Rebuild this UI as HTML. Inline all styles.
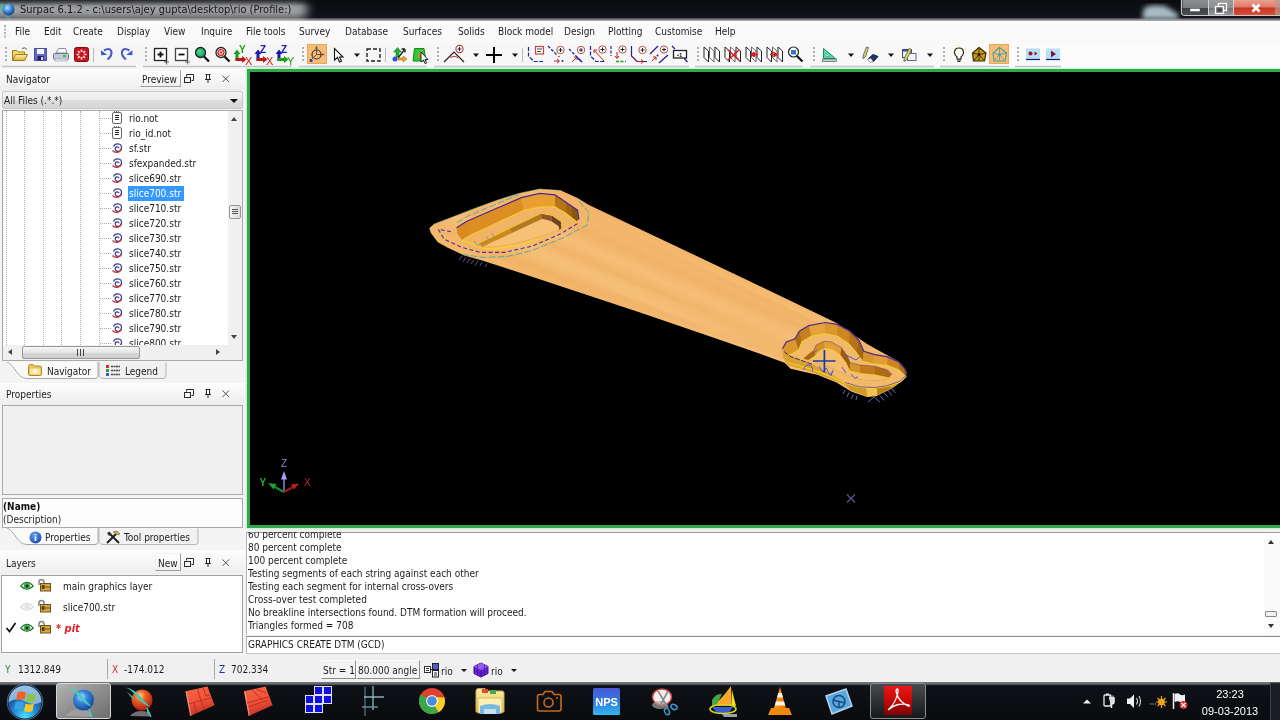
<!DOCTYPE html>
<html lang="en">
<head>
<meta charset="utf-8">
<title>Surpac 6.1.2</title>
<style>
*{box-sizing:border-box;margin:0;padding:0}
html,body{width:1280px;height:720px;overflow:hidden;background:#f0f0f0}
body{position:relative;font-family:"DejaVu Sans Condensed","DejaVu Sans","Liberation Sans",sans-serif;font-size:10px;color:#1c1c1c}
#root{position:absolute;left:0;top:0;width:1280px;height:720px;will-change:transform}
.abs{position:absolute}
.t{position:absolute;white-space:nowrap;line-height:14px;height:14px}
.vdot{width:0;border-left:1px dotted #b4b4b4}
.hdot{height:0;border-top:1px dotted #a8a8a8}
.btn{border:1px solid #f2f2f2;border-right-color:#9d9d9d;border-bottom-color:#9d9d9d;background:linear-gradient(#ffffff,#f0f0f0)}
#titlebar{left:0;top:0;width:1280px;height:21px;background:linear-gradient(#0a0c10,#0e1116 70%,#14171c 84%,#4a4c50 88%,#7a7c7e 93%,#9a9a9a 97%,#d8d8d8)}
#titleglow{left:-14px;top:0px;width:322px;height:19px;border-radius:11px;background:rgba(255,255,255,.62);filter:blur(5px)}
#title{left:20px;top:2px;font-size:11px;line-height:16px;height:16px;color:#161616}
#menubar{left:0;top:21px;width:1280px;height:22px;background:linear-gradient(#fcfcfc,#f8f8f8)}
#toolbar{left:0;top:43px;width:1280px;height:26px;background:linear-gradient(90deg,#f5f5f5,#f8f8f8 70%,#fcfcfc 85%)}
#leftbg{left:0;top:69px;width:247px;height:589px;background:#f4f4f4}
#viewport{left:247px;top:69px;width:1040px;height:459px;background:#000;border:3px solid #2ea84a;box-shadow:0 0 1.500px 1px #c4efcc}
#output{left:246px;top:532px;width:1034px;height:103px;background:#fefefe;border-top:1px solid #9a9a9a;border-left:1px solid #b5b5b5;overflow:hidden}
#cmd{left:246px;top:636px;width:1034px;height:18px;background:#fefefe;border-top:1px solid #8c8c8c;border-left:1px solid #b5b5b5;border-bottom:1px solid #c8c8c8}
#status{left:0;top:655px;width:1280px;height:27px;background:#f0f0f0}
#taskbar{left:0;top:682px;width:1280px;height:38px;background:#0b0d10}
</style>
</head>
<body>
<div id="root">
<div id="titlebar" class="abs"></div>
<div id="titleglow" class="abs"></div>
<div class="abs" style="left:0;top:0;width:330px;height:6px;background:linear-gradient(rgba(10,12,16,.600),rgba(10,12,16,0))"></div>
<svg class="abs" style="left:0;top:1px" width="16" height="17" viewBox="0 0 16 17"><defs><radialGradient id="orb" cx="0.4" cy="0.35" r="0.7"><stop offset="0" stop-color="#b8e0ff"/><stop offset="0.5" stop-color="#3888d8"/><stop offset="1" stop-color="#103878"/></radialGradient></defs><circle cx="8.500" cy="8.500" r="6" fill="url(#orb)"/><path d="M0.500 3Q3 3.500 4.500 6M0.500 6.500Q2.500 7 3.500 9M6 15Q7 16.500 9 16.500" stroke="#30b8b0" stroke-width="1.300" fill="none"/></svg>
<div id="title" class="t">Surpac 6.1.2 - c:\users\ajey gupta\desktop\rio (Profile:)</div>
<svg class="abs" style="left:1120px;top:0" width="160" height="20" viewBox="1120 0 160 20"><defs><filter id="bl"><feGaussianBlur stdDeviation="2.500"/></filter><linearGradient id="wmin" x1="0" y1="0" x2="0" y2="1"><stop offset="0" stop-color="#8c8e90"/><stop offset="0.500" stop-color="#7c7e82"/><stop offset="0.520" stop-color="#3c4046"/><stop offset="1" stop-color="#4a4e54"/></linearGradient><linearGradient id="wres" x1="0" y1="0" x2="0" y2="1"><stop offset="0" stop-color="#9a9c9e"/><stop offset="0.500" stop-color="#8e9092"/><stop offset="0.520" stop-color="#6e7276"/><stop offset="1" stop-color="#94989c"/></linearGradient><linearGradient id="wcls" x1="0" y1="0" x2="0" y2="1"><stop offset="0" stop-color="#eaa090"/><stop offset="0.480" stop-color="#e07868"/><stop offset="0.520" stop-color="#c83420"/><stop offset="1" stop-color="#d85038"/></linearGradient></defs><path d="M1144 8Q1150 4 1165 6L1178 14V19H1142Z" fill="#a8bcc4" filter="url(#bl)"/><path d="M1181.500 -1V12Q1181.500 15.500 1185 15.500H1280" fill="none" stroke="#c8c8c8" stroke-width="1.200"/><path d="M1182.500 0H1208V15H1185.500Q1182.500 15 1182.500 12Z" fill="url(#wmin)"/><rect x="1209" y="0" width="24" height="15" fill="url(#wres)"/><rect x="1234" y="0" width="46" height="15" fill="url(#wcls)"/><path d="M1208.500 0V15M1233.500 0V15" stroke="#d0d0d0" stroke-width="1"/><rect x="1190" y="8.500" width="10" height="3" fill="#fff" stroke="#555" stroke-width="0.500"/><rect x="1218.500" y="3.500" width="8" height="7" fill="#888" stroke="#fff" stroke-width="1.300"/><rect x="1215.500" y="6.500" width="8" height="7" fill="#777" stroke="#fff" stroke-width="1.300"/><rect x="1217.500" y="8.500" width="4" height="3" fill="#444"/><path d="M1252.500 4.500L1259.500 11.500M1259.500 4.500L1252.500 11.500" stroke="#fff" stroke-width="2.600"/><rect x="1275" y="0" width="5" height="15" fill="#b89890" opacity="0.700"/></svg>
<div id="menubar" class="abs"></div>
<svg class="abs" style="left:3px;top:24px" width="4" height="14" viewBox="0 0 4 14"><g fill="#b4b4b4"><rect x="1" y="1" width="2" height="2"/><rect x="1" y="4.500" width="2" height="2"/><rect x="1" y="8" width="2" height="2"/><rect x="1" y="11.500" width="2" height="2"/></g></svg>
<span class="t" style="left:15px;top:25px;">File</span>
<span class="t" style="left:44px;top:25px;">Edit</span>
<span class="t" style="left:73px;top:25px;">Create</span>
<span class="t" style="left:117px;top:25px;">Display</span>
<span class="t" style="left:164px;top:25px;">View</span>
<span class="t" style="left:201px;top:25px;">Inquire</span>
<span class="t" style="left:246px;top:25px;">File tools</span>
<span class="t" style="left:299px;top:25px;">Survey</span>
<span class="t" style="left:345px;top:25px;">Database</span>
<span class="t" style="left:403px;top:25px;">Surfaces</span>
<span class="t" style="left:458px;top:25px;">Solids</span>
<span class="t" style="left:498px;top:25px;">Block model</span>
<span class="t" style="left:564px;top:25px;">Design</span>
<span class="t" style="left:608px;top:25px;">Plotting</span>
<span class="t" style="left:655px;top:25px;">Customise</span>
<span class="t" style="left:715px;top:25px;">Help</span>
<div id="toolbar" class="abs"></div>
<svg class="abs" style="left:0;top:40px" width="1280" height="30" viewBox="0 40 1280 30"><defs><linearGradient id="fold" x1="0" y1="0" x2="0" y2="1"><stop offset="0" stop-color="#fff3b0"/><stop offset="1" stop-color="#e0b030"/></linearGradient><radialGradient id="gm" cx="0.4" cy="0.4" r="0.7"><stop offset="0" stop-color="#40e070"/><stop offset="1" stop-color="#1a8a80"/></radialGradient></defs><rect x="5" y="47" width="2" height="2" fill="#b0b0b0"/><rect x="5" y="51" width="2" height="2" fill="#b0b0b0"/><rect x="5" y="55" width="2" height="2" fill="#b0b0b0"/><rect x="5" y="59" width="2" height="2" fill="#b0b0b0"/><path d="M2 66.500H136" stroke="#c4c4c4" stroke-width="1.500"/><path d="M12.500 60.500V50.500H17L18.500 52H24.500V54" fill="#f5d860" stroke="#a07818"/><path d="M12.500 60.500L15.500 54.500H27.500L24.500 60.500Z" fill="url(#fold)" stroke="#a07818"/><path d="M22 48.500Q25 46.500 27 49.500" fill="none" stroke="#806010"/><rect x="34.500" y="48.500" width="12" height="12" fill="#6468c4" stroke="#4a4ea8"/><rect x="37" y="49" width="7" height="5" fill="#f4f4ff"/><rect x="37.500" y="56" width="6" height="4.500" fill="#202060"/><rect x="41" y="57" width="2" height="3" fill="#d0d0f0"/><path d="M56 53L58.500 48.500H65.500L67 53Z" fill="#fff" stroke="#8890a0"/><rect x="53.500" y="53.500" width="15" height="6" rx="1" fill="#c4c8d8" stroke="#70788c"/><rect x="55" y="59" width="12" height="2" fill="#e8e8f0" stroke="#8890a0" stroke-width="0.500"/><rect x="63" y="55" width="3" height="2" fill="#30c040"/><rect x="74.500" y="47.500" width="14" height="14" rx="2" fill="#c81420" stroke="#8a0810"/><g stroke="#ffdcdc" stroke-width="1.700"><path d="M81.500 49.500V52M81.500 57V59.500M76.500 54.500H79M84 54.500H86.500M78 51L79.800 52.800M83.200 56.200L85 58M85 51L83.200 52.800M79.800 56.200L78 58"/></g><path d="M93.500 48V62" stroke="#b8b8b8"/><path d="M107.500 59.500Q112.500 55 111.300 51.200Q109.500 47.300 104 50.500" stroke="#4a5cc4" stroke-width="2.100" fill="none"/><path d="M100.800 50.300L101.200 55.200L107.200 54.800Z" fill="#3a5ad4"/><path d="M125.900 59.500Q120.900 55 122.100 51.200Q123.900 47.300 129.400 50.500" stroke="#4a5cc4" stroke-width="2.100" fill="none"/><path d="M132.600 50.300L132.200 55.200L126.200 54.800Z" fill="#3a5ad4"/><rect x="145" y="47" width="2" height="2" fill="#b0b0b0"/><rect x="145" y="51" width="2" height="2" fill="#b0b0b0"/><rect x="145" y="55" width="2" height="2" fill="#b0b0b0"/><rect x="145" y="59" width="2" height="2" fill="#b0b0b0"/><path d="M143 66.500H292" stroke="#c4c4c4" stroke-width="1.500"/><rect x="154.500" y="48.500" width="12" height="12" fill="#fff" stroke="#222" stroke-width="1.300"/><path d="M157.500 54.500H163.500M160.500 51.500V57.500" stroke="#111" stroke-width="1.800"/><path d="M164 62H169M166.500 59.500V64.500" stroke="#333" stroke-width="0.800"/><rect x="175.500" y="48.500" width="12" height="12" fill="#fff" stroke="#444" stroke-width="1.300"/><path d="M178.500 54.500H184.500" stroke="#111" stroke-width="1.800"/><path d="M185 62H190M187.500 59.500V64.500" stroke="#555" stroke-width="0.800"/><circle cx="200.500" cy="52.500" r="5" fill="url(#gm)" stroke="#222" stroke-width="1.300"/><path d="M204 56.500L209 61.500" stroke="#111" stroke-width="2.200"/><circle cx="221" cy="52.500" r="5" fill="#fff" stroke="#222" stroke-width="1.300"/><circle cx="221" cy="52.500" r="3" fill="#f8c0c0" stroke="#d02020" stroke-width="1.200"/><circle cx="221" cy="52.500" r="1" fill="#c01010"/><path d="M224.500 56.500L229.500 61.500" stroke="#111" stroke-width="2.200"/><path d="M235.5 61V54H233.5L237 49.500L240.5 54H238.5V61Z" fill="#18a018"/><path d="M235.5 58H242V56L246.5 59.500L242 63V61H235.5Z" fill="#c01818"/><text x="239" y="53" font-size="10" font-weight="bold" fill="#18a018" font-family="Liberation Sans,sans-serif">Y</text><text x="245" y="64.500" font-size="11" fill="#d01818" font-family="Liberation Sans,sans-serif">X</text><path d="M256.5 61V54H254.5L258 49.500L261.5 54H259.5V61Z" fill="#1818b0"/><path d="M256.5 58H263V56L267.5 59.500L263 63V61H256.5Z" fill="#c01818"/><text x="260" y="53" font-size="10" font-weight="bold" fill="#2020b0" font-family="Liberation Sans,sans-serif">Z</text><text x="266" y="64.500" font-size="11" fill="#d01818" font-family="Liberation Sans,sans-serif">X</text><path d="M277.5 61V54H275.5L279 49.500L282.5 54H280.5V61Z" fill="#1818b0"/><path d="M277.5 58H284V56L288.5 59.500L284 63V61H277.5Z" fill="#18a018"/><text x="281" y="53" font-size="10" font-weight="bold" fill="#2020b0" font-family="Liberation Sans,sans-serif">Z</text><text x="287" y="64.500" font-size="11" fill="#18a018" font-family="Liberation Sans,sans-serif">Y</text><rect x="302" y="47" width="2" height="2" fill="#b0b0b0"/><rect x="302" y="51" width="2" height="2" fill="#b0b0b0"/><rect x="302" y="55" width="2" height="2" fill="#b0b0b0"/><rect x="302" y="59" width="2" height="2" fill="#b0b0b0"/><path d="M299 66.500H427" stroke="#c4c4c4" stroke-width="1.500"/><rect x="307.500" y="44.500" width="19" height="19" fill="#f8bc74" stroke="#e8a860"/><circle cx="316.500" cy="54.500" r="4.500" fill="none" stroke="#333" stroke-width="1.200"/><path d="M316.500 54.500V46.500M316.500 54.500H324M316.500 54.500L311 60" stroke="#555" stroke-width="1"/><path d="M315 48.500L316.500 46L318 48.500Z" fill="#208020"/><path d="M310 61.500L310.500 59L312.500 61Z" fill="#2030c0" stroke="#2030c0"/><path d="M322 53.500L325 54.500L322 55.500Z" fill="#c02020"/><path d="M334.500 48.500V60L337.500 57.500L339.500 62L341.500 61L339.500 57H343Z" fill="#fff" stroke="#111" stroke-width="1.100"/><path d="M354 53.500H360L357 57Z" fill="#111"/><rect x="367" y="49" width="13" height="12" fill="none" stroke="#222" stroke-width="1.400" stroke-dasharray="4 2"/><path d="M385.500 48V62" stroke="#b8b8b8"/><path d="M396 57V52H393.500L397.500 47.500L401.500 52H399V57Z" fill="#20b030" stroke="#107018" stroke-width="0.500"/><path d="M398 58L405 49M405 49H401.500M405 49V52.500" stroke="#222" stroke-width="1.300" fill="none"/><circle cx="395" cy="59" r="2.500" fill="#3050e0"/><path d="M398 58H403V56L407 59L403 62V60H398Z" fill="#f0a020" stroke="#a06010" stroke-width="0.500"/><path d="M413 61L414.500 48.500H424L426 61Z" fill="#28c838" stroke="#108820"/><path d="M416 58L421 50H423L419 58Z" fill="#c89030"/><path d="M421 52V62L423.500 60L425 63.500L426.500 63L425 59.500H428Z" fill="#fff" stroke="#111" stroke-width="0.900"/><rect x="437" y="47" width="2" height="2" fill="#b0b0b0"/><rect x="437" y="51" width="2" height="2" fill="#b0b0b0"/><rect x="437" y="55" width="2" height="2" fill="#b0b0b0"/><rect x="437" y="59" width="2" height="2" fill="#b0b0b0"/><path d="M434 66.500H689" stroke="#c4c4c4" stroke-width="1.500"/><path d="M444 62L454 52L464 62" fill="none" stroke="#222" stroke-width="1.200"/><path d="M450 57.500Q454 55 458 57.500" fill="none" stroke="#c03030"/><circle cx="459.500" cy="49" r="3.600" fill="#fff" stroke="#b04040" stroke-width="1.100"/><path d="M457.500 49H461.500M459.500 47V51" stroke="#222" stroke-width="1"/><path d="M473 53.500H479L476 57Z" fill="#111"/><path d="M486 55H502M494 47V63" stroke="#000" stroke-width="2"/><path d="M512 53.500H518L515 57Z" fill="#111"/><path d="M522.500 48V62" stroke="#b8b8b8"/><path d="M528.500 47V56L534 61.500H543" fill="none" stroke="#2020a0" stroke-width="1.200" stroke-dasharray="4 1.500"/><rect x="535.500" y="46.500" width="8" height="7.500" fill="#fff" stroke="#c04848" stroke-width="1.200"/><path d="M537 49H542M537 51.500H541" stroke="#444"/><path d="M548 46L557 55" stroke="#2020a0" stroke-width="1.300" stroke-dasharray="3 1.500"/><circle cx="560.5" cy="50" r="3.700" fill="#fff" stroke="#b05050" stroke-width="1"/><path d="M558.5 50H562.5M560.5 48V52" stroke="#222" stroke-width="1"/><path d="M554 61H559M557 59L559.500 61L557 63" stroke="#c02020" fill="none"/><circle cx="562.500" cy="61" r="1" fill="#2020a0"/><circle cx="559" cy="56.500" r="0.800" fill="#c02020"/><path d="M569 49L582 62" stroke="#2020a0" stroke-width="1.300" stroke-dasharray="3 1.500"/><circle cx="581" cy="50" r="3.700" fill="#fff" stroke="#b05050" stroke-width="1"/><path d="M579 50H583M581 48V52" stroke="#222" stroke-width="1"/><path d="M572 62L577 57M577 57H574M577 57V60" stroke="#c02020" fill="none"/><path d="M576.500 57L582 62" stroke="#2020a0" stroke-width="1.300"/><path d="M590.500 46V56L596 61.500H605" fill="none" stroke="#2020a0" stroke-width="1.200" stroke-dasharray="4 1.500"/><path d="M604 61L594 50M594 50H597M594 50V53" stroke="#c02020" fill="none"/><circle cx="602.5" cy="49.5" r="3.700" fill="#fff" stroke="#b05050" stroke-width="1"/><path d="M600.5 49.5H604.5M602.5 47.5V51.5" stroke="#222" stroke-width="1"/><path d="M611 46V56" stroke="#2020a0" stroke-width="1.200" stroke-dasharray="3 1.500"/><circle cx="622.5" cy="49.5" r="3.700" fill="#fff" stroke="#b05050" stroke-width="1"/><path d="M620.5 49.5H624.5M622.5 47.5V51.5" stroke="#222" stroke-width="1"/><path d="M617 52V58M615 56L617 58.500L619 56" stroke="#c02020" fill="none"/><path d="M616 61.500H626" stroke="#18a018" stroke-width="1.300" stroke-dasharray="3 1.500"/><path d="M631.500 46V56L637 61.500H647" fill="none" stroke="#2020a0" stroke-width="1.200"/><path d="M633 57L637 61.500H643M641 59.500L643.500 61.500L641 63.500" stroke="#c02020" fill="none"/><circle cx="642.5" cy="50" r="3.700" fill="#fff" stroke="#b05050" stroke-width="1"/><path d="M640.5 50H644.5M642.5 48V52" stroke="#222" stroke-width="1"/><path d="M650 54L658 46M659 63L668 55" stroke="#2020a0" stroke-width="1.300"/><circle cx="664" cy="49.5" r="3.700" fill="#fff" stroke="#b05050" stroke-width="1"/><path d="M662 49.5H666M664 47.5V51.5" stroke="#222" stroke-width="1"/><path d="M652 61L656 57M656 57H653M656 57V60" stroke="#c02020" fill="none"/><circle cx="657.500" cy="55.500" r="1" fill="#2020a0"/><path d="M672 46L675 49M684 58L687.500 62" stroke="#2020a0" stroke-width="1.300"/><rect x="673.500" y="50.500" width="13" height="7.500" fill="#fff" stroke="#222" stroke-width="1.300"/><text x="677" y="57" font-size="6" font-weight="bold" fill="#111" font-family="Liberation Sans,sans-serif">•1</text><rect x="697" y="47" width="2" height="2" fill="#b0b0b0"/><rect x="697" y="51" width="2" height="2" fill="#b0b0b0"/><rect x="697" y="55" width="2" height="2" fill="#b0b0b0"/><rect x="697" y="59" width="2" height="2" fill="#b0b0b0"/><path d="M695 66.500H803" stroke="#c4c4c4" stroke-width="1.500"/><path d="M704.0 47L708.5 51V62L704.0 57.500Z" fill="#fff" stroke="#222" stroke-width="1"/><path d="M709.5 47L714.0 51V62L709.5 57.500Z" fill="#fff" stroke="#666" stroke-width="1"/><path d="M715.0 47L719.5 51V62L715.0 57.500Z" fill="#fff" stroke="#222" stroke-width="1"/><path d="M725.0 47L729.5 51V62L725.0 57.500Z" fill="#fff" stroke="#222" stroke-width="1"/><path d="M730.5 47L735.0 51V62L730.5 57.500Z" fill="#fff" stroke="#666" stroke-width="1"/><path d="M736.0 47L740.5 51V62L736.0 57.500Z" fill="#fff" stroke="#222" stroke-width="1"/><path d="M728 50L739 60M739 50L728 60" stroke="#e01818" stroke-width="1.600"/><path d="M746.0 47L750.5 51V62L746.0 57.500Z" fill="#fff" stroke="#222" stroke-width="1"/><path d="M751.5 47L756.0 51V62L751.5 57.500Z" fill="#fff" stroke="#666" stroke-width="1"/><path d="M757.0 47L761.5 51V62L757.0 57.500Z" fill="#fff" stroke="#222" stroke-width="1"/><path d="M758 54.500H752M754.500 52L751.500 54.500L754.500 57" stroke="#e01818" stroke-width="1.600" fill="none"/><circle cx="754" cy="54.500" r="1.700" fill="#e01818"/><path d="M767.0 47L771.5 51V62L767.0 57.500Z" fill="#fff" stroke="#222" stroke-width="1"/><path d="M772.5 47L777.0 51V62L772.5 57.500Z" fill="#fff" stroke="#666" stroke-width="1"/><path d="M778.0 47L782.5 51V62L778.0 57.500Z" fill="#fff" stroke="#222" stroke-width="1"/><path d="M770 54.500H776M773.500 52L776.500 54.500L773.500 57" stroke="#e01818" stroke-width="1.600" fill="none"/><circle cx="775" cy="54.500" r="1.700" fill="#e01818"/><circle cx="793.500" cy="52" r="5" fill="#fff" stroke="#222" stroke-width="1.200"/><rect x="791" y="50" width="5" height="4.500" fill="#3078d8"/><path d="M797 56L802.500 61.500" stroke="#111" stroke-width="2.200"/><rect x="813" y="47" width="2" height="2" fill="#b0b0b0"/><rect x="813" y="51" width="2" height="2" fill="#b0b0b0"/><rect x="813" y="55" width="2" height="2" fill="#b0b0b0"/><rect x="813" y="59" width="2" height="2" fill="#b0b0b0"/><path d="M810 66.500H934" stroke="#c4c4c4" stroke-width="1.500"/><path d="M823.500 48.500V58.500H835.500Z" fill="#58d8b0" stroke="#208868"/><path d="M826 56.500V53.500L829.500 56.500Z" fill="#e8fff8" stroke="#208868" stroke-width="0.500"/><rect x="822.500" y="59" width="14" height="2.500" fill="#c8d0d0" stroke="#506060" stroke-width="0.700"/><path d="M848 53.500H854L851 57Z" fill="#111"/><path d="M863 56L866.500 47L868.500 47.500L865.500 57L863 58.500Z" fill="#d0d868" stroke="#555" stroke-width="0.800"/><path d="M868 59L873 54.500L878 56.500L873.500 61.500Z" fill="#183868" stroke="#102040"/><path d="M867.500 59.500L870 62.500L873.500 61.500L870.500 58Z" fill="#f0f0f0" stroke="#666" stroke-width="0.600"/><path d="M888 53.500H894L891 57Z" fill="#111"/><rect x="902.500" y="49.500" width="9" height="8" fill="#f0f0f8" stroke="#404878"/><rect x="902.500" y="49.500" width="9" height="2" fill="#404898"/><rect x="907.500" y="53.500" width="8.500" height="7" fill="#f4f4ff" stroke="#606890"/><path d="M904 59L909 48.500L911.500 49.500L906.500 60L904 61.500Z" fill="#d8e050" stroke="#555" stroke-width="0.800"/><path d="M927 53.500H933L930 57Z" fill="#111"/><rect x="943" y="47" width="2" height="2" fill="#b0b0b0"/><rect x="943" y="51" width="2" height="2" fill="#b0b0b0"/><rect x="943" y="55" width="2" height="2" fill="#b0b0b0"/><rect x="943" y="59" width="2" height="2" fill="#b0b0b0"/><path d="M940 66.500H1009" stroke="#c4c4c4" stroke-width="1.500"/><g stroke="#f0f080" stroke-width="1"><path d="M959 44.500V46.500M952 48L953.500 49.500M966 48L964.500 49.500M950.500 53H952.500M965.500 53H967.500"/></g><path d="M959 48Q954.500 48 954.500 52.500Q954.500 55 957 57V59H961V57Q963.500 55 963.500 52.500Q963.500 48 959 48Z" fill="#fffff0" stroke="#222" stroke-width="1.200"/><path d="M957 60H961M957.500 61.500H960.500" stroke="#222" stroke-width="1"/><path d="M979 47.500L986 53L984.500 61H973.500L972.500 53Z" fill="#c89820" stroke="#3a2a08" stroke-width="1.200"/><path d="M979 47.500V61M972.500 53L979 54.500L986 53M979 54.500L973.500 61M979 54.500L984.500 61" stroke="#3a2a08" stroke-width="0.900" fill="none"/><circle cx="979" cy="54.500" r="1.300" fill="#1a1000"/><rect x="989.500" y="44.500" width="19" height="19" fill="#f8bc74" stroke="#e8a860"/><path d="M999.500 47.500L1006.500 53L1005 61H994L993 53Z" fill="none" stroke="#48a0a0" stroke-width="1.100"/><path d="M999.500 47.500V61M993 53L999.500 54.500L1006.500 53M999.500 54.500L994 61M999.500 54.500L1005 61" stroke="#48a0a0" stroke-width="0.800" fill="none"/><circle cx="999.500" cy="54.500" r="1.300" fill="#30a0c0"/><rect x="1017" y="47" width="2" height="2" fill="#b0b0b0"/><rect x="1017" y="51" width="2" height="2" fill="#b0b0b0"/><rect x="1017" y="55" width="2" height="2" fill="#b0b0b0"/><rect x="1017" y="59" width="2" height="2" fill="#b0b0b0"/><path d="M1015 66.500H1061" stroke="#c4c4c4" stroke-width="1.500"/><rect x="1026" y="48.500" width="14" height="11" fill="#b8e0f4"/><path d="M1026 59.500H1040" stroke="#181878" stroke-width="1.200"/><circle cx="1030.500" cy="53.500" r="2" fill="#a01030"/><path d="M1034.500 51.500L1037.500 53.500L1034.500 55.500Z" fill="#a01030"/><rect x="1046" y="48.500" width="14" height="11" fill="#b8e0f4"/><path d="M1046 59.500H1060" stroke="#181878" stroke-width="1.200"/><path d="M1051 50.500L1056 54L1051 57.500Z" fill="#801040"/></svg>
<div id="leftbg" class="abs"></div>
<div class="abs" style="left:0;top:69px;width:245px;height:22px;background:linear-gradient(#fdfdfd,#eeeeee)"></div>
<span class="t" style="left:6px;top:73px;">Navigator</span>
<div class="abs btn" style="left:140px;top:70px;width:41px;height:17px"></div><span class="t" style="left:142px;top:73px;">Preview</span>
<svg class="abs" style="left:182px;top:72px" width="52" height="14" viewBox="0 0 52 14"><g fill="none" stroke="#2a2a2a" stroke-width="1"><path d="M4.500 4.500V2.500H11.500V8.500H9.500"/><rect x="2.500" y="5.500" width="6" height="5"/><path d="M23.500 2.500H28.500M24.500 2.500V7.500H27.500V2.500M23 7.500H29M26 7.500V11"/><path d="M40.500 3.500L47 10M47 3.500L40.500 10" stroke="#444" stroke-width="0.900"/></g></svg>
<div class="abs" style="left:2px;top:91px;width:241px;height:18px;border:1px solid #c8c8c8;border-radius:2px;background:linear-gradient(#f4f4f4,#ebebeb 50%,#dddddd 52%,#d6d6d6)"></div>
<span class="t" style="left:4px;top:94px;">All Files (.*.*)</span>
<div class="abs" style="left:230px;top:99px;border:4px solid transparent;border-top:4px solid #111;border-bottom:0"></div>
<div class="abs" id="tree" style="left:2px;top:110px;width:241px;height:251px;background:#fff;border:1px solid #a9a9a9;overflow:hidden">
<div class="abs vdot" style="left:3px;top:0;height:234px"></div>
<div class="abs vdot" style="left:21px;top:0;height:234px"></div>
<div class="abs vdot" style="left:40px;top:0;height:234px"></div>
<div class="abs vdot" style="left:58px;top:0;height:234px"></div>
<div class="abs vdot" style="left:77px;top:0;height:234px"></div>
<div class="abs vdot" style="left:96px;top:0;height:234px"></div>
<div class="abs hdot" style="left:97px;top:7px;width:11px"></div>
<svg class="abs" style="left:108px;top:0px" width="12" height="14" viewBox="0 0 12 14"><rect x="1.500" y="1.500" width="9" height="11" rx="1.500" fill="#fff" stroke="#666"/><path d="M3 0.500H9" stroke="#777" stroke-dasharray="1 1"/><path d="M4 4.500H8M4 6.500H8M4 8.500H8" stroke="#222"/></svg>
<span class="t" style="left:126px;top:1px;">rio.not</span>
<div class="abs hdot" style="left:97px;top:22px;width:11px"></div>
<svg class="abs" style="left:108px;top:15px" width="12" height="14" viewBox="0 0 12 14"><rect x="1.500" y="1.500" width="9" height="11" rx="1.500" fill="#fff" stroke="#666"/><path d="M3 0.500H9" stroke="#777" stroke-dasharray="1 1"/><path d="M4 4.500H8M4 6.500H8M4 8.500H8" stroke="#222"/></svg>
<span class="t" style="left:126px;top:16px;">rio_id.not</span>
<div class="abs hdot" style="left:97px;top:37px;width:11px"></div>
<svg class="abs" style="left:108px;top:31px" width="13" height="12" viewBox="0 0 13 12"><path d="M2.500 4.500C4 0.800 10.500 1 10.500 5.500C10.500 10 4.500 10.500 4.200 7C4 4.500 8 4.300 8 6.300" fill="none" stroke="#3a3f8f" stroke-width="1.200"/><path d="M1.500 8.500C4 11.500 9 11 10.500 7" fill="none" stroke="#d03030" stroke-width="1.200"/></svg>
<span class="t" style="left:126px;top:31px;">sf.str</span>
<div class="abs hdot" style="left:97px;top:52px;width:11px"></div>
<svg class="abs" style="left:108px;top:46px" width="13" height="12" viewBox="0 0 13 12"><path d="M2.500 4.500C4 0.800 10.500 1 10.500 5.500C10.500 10 4.500 10.500 4.200 7C4 4.500 8 4.300 8 6.300" fill="none" stroke="#3a3f8f" stroke-width="1.200"/><path d="M1.500 8.500C4 11.500 9 11 10.500 7" fill="none" stroke="#d03030" stroke-width="1.200"/></svg>
<span class="t" style="left:126px;top:46px;">sfexpanded.str</span>
<div class="abs hdot" style="left:97px;top:67px;width:11px"></div>
<svg class="abs" style="left:108px;top:61px" width="13" height="12" viewBox="0 0 13 12"><path d="M2.500 4.500C4 0.800 10.500 1 10.500 5.500C10.500 10 4.500 10.500 4.200 7C4 4.500 8 4.300 8 6.300" fill="none" stroke="#3a3f8f" stroke-width="1.200"/><path d="M1.500 8.500C4 11.500 9 11 10.500 7" fill="none" stroke="#d03030" stroke-width="1.200"/></svg>
<span class="t" style="left:126px;top:61px;">slice690.str</span>
<div class="abs hdot" style="left:97px;top:82px;width:11px"></div>
<svg class="abs" style="left:108px;top:76px" width="13" height="12" viewBox="0 0 13 12"><path d="M2.500 4.500C4 0.800 10.500 1 10.500 5.500C10.500 10 4.500 10.500 4.200 7C4 4.500 8 4.300 8 6.300" fill="none" stroke="#3a3f8f" stroke-width="1.200"/><path d="M1.500 8.500C4 11.500 9 11 10.500 7" fill="none" stroke="#d03030" stroke-width="1.200"/></svg>
<div class="abs" style="left:125px;top:75px;width:56px;height:15px;background:#3399ff"></div>
<span class="t" style="left:126px;top:76px;color:#fff">slice700.str</span>
<div class="abs hdot" style="left:97px;top:97px;width:11px"></div>
<svg class="abs" style="left:108px;top:91px" width="13" height="12" viewBox="0 0 13 12"><path d="M2.500 4.500C4 0.800 10.500 1 10.500 5.500C10.500 10 4.500 10.500 4.200 7C4 4.500 8 4.300 8 6.300" fill="none" stroke="#3a3f8f" stroke-width="1.200"/><path d="M1.500 8.500C4 11.500 9 11 10.500 7" fill="none" stroke="#d03030" stroke-width="1.200"/></svg>
<span class="t" style="left:126px;top:91px;">slice710.str</span>
<div class="abs hdot" style="left:97px;top:112px;width:11px"></div>
<svg class="abs" style="left:108px;top:106px" width="13" height="12" viewBox="0 0 13 12"><path d="M2.500 4.500C4 0.800 10.500 1 10.500 5.500C10.500 10 4.500 10.500 4.200 7C4 4.500 8 4.300 8 6.300" fill="none" stroke="#3a3f8f" stroke-width="1.200"/><path d="M1.500 8.500C4 11.500 9 11 10.500 7" fill="none" stroke="#d03030" stroke-width="1.200"/></svg>
<span class="t" style="left:126px;top:106px;">slice720.str</span>
<div class="abs hdot" style="left:97px;top:127px;width:11px"></div>
<svg class="abs" style="left:108px;top:121px" width="13" height="12" viewBox="0 0 13 12"><path d="M2.500 4.500C4 0.800 10.500 1 10.500 5.500C10.500 10 4.500 10.500 4.200 7C4 4.500 8 4.300 8 6.300" fill="none" stroke="#3a3f8f" stroke-width="1.200"/><path d="M1.500 8.500C4 11.500 9 11 10.500 7" fill="none" stroke="#d03030" stroke-width="1.200"/></svg>
<span class="t" style="left:126px;top:121px;">slice730.str</span>
<div class="abs hdot" style="left:97px;top:142px;width:11px"></div>
<svg class="abs" style="left:108px;top:136px" width="13" height="12" viewBox="0 0 13 12"><path d="M2.500 4.500C4 0.800 10.500 1 10.500 5.500C10.500 10 4.500 10.500 4.200 7C4 4.500 8 4.300 8 6.300" fill="none" stroke="#3a3f8f" stroke-width="1.200"/><path d="M1.500 8.500C4 11.500 9 11 10.500 7" fill="none" stroke="#d03030" stroke-width="1.200"/></svg>
<span class="t" style="left:126px;top:136px;">slice740.str</span>
<div class="abs hdot" style="left:97px;top:157px;width:11px"></div>
<svg class="abs" style="left:108px;top:151px" width="13" height="12" viewBox="0 0 13 12"><path d="M2.500 4.500C4 0.800 10.500 1 10.500 5.500C10.500 10 4.500 10.500 4.200 7C4 4.500 8 4.300 8 6.300" fill="none" stroke="#3a3f8f" stroke-width="1.200"/><path d="M1.500 8.500C4 11.500 9 11 10.500 7" fill="none" stroke="#d03030" stroke-width="1.200"/></svg>
<span class="t" style="left:126px;top:151px;">slice750.str</span>
<div class="abs hdot" style="left:97px;top:172px;width:11px"></div>
<svg class="abs" style="left:108px;top:166px" width="13" height="12" viewBox="0 0 13 12"><path d="M2.500 4.500C4 0.800 10.500 1 10.500 5.500C10.500 10 4.500 10.500 4.200 7C4 4.500 8 4.300 8 6.300" fill="none" stroke="#3a3f8f" stroke-width="1.200"/><path d="M1.500 8.500C4 11.500 9 11 10.500 7" fill="none" stroke="#d03030" stroke-width="1.200"/></svg>
<span class="t" style="left:126px;top:166px;">slice760.str</span>
<div class="abs hdot" style="left:97px;top:187px;width:11px"></div>
<svg class="abs" style="left:108px;top:181px" width="13" height="12" viewBox="0 0 13 12"><path d="M2.500 4.500C4 0.800 10.500 1 10.500 5.500C10.500 10 4.500 10.500 4.200 7C4 4.500 8 4.300 8 6.300" fill="none" stroke="#3a3f8f" stroke-width="1.200"/><path d="M1.500 8.500C4 11.500 9 11 10.500 7" fill="none" stroke="#d03030" stroke-width="1.200"/></svg>
<span class="t" style="left:126px;top:181px;">slice770.str</span>
<div class="abs hdot" style="left:97px;top:202px;width:11px"></div>
<svg class="abs" style="left:108px;top:196px" width="13" height="12" viewBox="0 0 13 12"><path d="M2.500 4.500C4 0.800 10.500 1 10.500 5.500C10.500 10 4.500 10.500 4.200 7C4 4.500 8 4.300 8 6.300" fill="none" stroke="#3a3f8f" stroke-width="1.200"/><path d="M1.500 8.500C4 11.500 9 11 10.500 7" fill="none" stroke="#d03030" stroke-width="1.200"/></svg>
<span class="t" style="left:126px;top:196px;">slice780.str</span>
<div class="abs hdot" style="left:97px;top:217px;width:11px"></div>
<svg class="abs" style="left:108px;top:211px" width="13" height="12" viewBox="0 0 13 12"><path d="M2.500 4.500C4 0.800 10.500 1 10.500 5.500C10.500 10 4.500 10.500 4.200 7C4 4.500 8 4.300 8 6.300" fill="none" stroke="#3a3f8f" stroke-width="1.200"/><path d="M1.500 8.500C4 11.500 9 11 10.500 7" fill="none" stroke="#d03030" stroke-width="1.200"/></svg>
<span class="t" style="left:126px;top:211px;">slice790.str</span>
<div class="abs hdot" style="left:97px;top:232px;width:11px"></div>
<svg class="abs" style="left:108px;top:226px" width="13" height="12" viewBox="0 0 13 12"><path d="M2.500 4.500C4 0.800 10.500 1 10.500 5.500C10.500 10 4.500 10.500 4.200 7C4 4.500 8 4.300 8 6.300" fill="none" stroke="#3a3f8f" stroke-width="1.200"/><path d="M1.500 8.500C4 11.500 9 11 10.500 7" fill="none" stroke="#d03030" stroke-width="1.200"/></svg>
<span class="t" style="left:126px;top:226px;">slice800.str</span>
<div class="abs" style="left:225px;top:0;width:14px;height:234px;background:#f0f0f0"></div>
<div class="abs" style="left:228px;top:6px;border:3.500px solid transparent;border-bottom:4px solid #444;border-top:0"></div>
<div class="abs" style="left:228px;top:224px;border:3.500px solid transparent;border-top:4px solid #444;border-bottom:0"></div>
<div class="abs" style="left:226px;top:94px;width:12px;height:14px;border:1px solid #979797;border-radius:2px;background:linear-gradient(90deg,#f4f4f4,#dcdcdc)"></div>
<div class="abs" style="left:229px;top:98px;width:6px;height:5px;border-top:1px solid #555;border-bottom:1px solid #555"><div style="margin-top:1px;height:1px;background:#555"></div></div>
<div class="abs" style="left:0;top:234px;width:239px;height:15px;background:#f0f0f0"></div>
<div class="abs" style="left:5px;top:238px;border:3.500px solid transparent;border-right:4px solid #444;border-left:0"></div>
<div class="abs" style="left:213px;top:238px;border:3.500px solid transparent;border-left:4px solid #444;border-right:0"></div>
<div class="abs" style="left:19px;top:235px;width:118px;height:13px;border:1px solid #979797;border-radius:2px;background:linear-gradient(#f5f5f5,#e6e6e6 50%,#d6d6d6 52%,#cfcfcf)"></div>
<div class="abs" style="left:74px;top:238px;width:7px;height:7px;border-left:1px solid #444;border-right:1px solid #444"><div style="margin-left:2px;width:1px;height:7px;background:#444"></div></div>
</div>
<svg class="abs" style="left:0;top:362px" width="245" height="19" viewBox="0 0 245 19"><path d="M99 0.500V13Q99 16.5 104 16.5H163Q166 16.5 166 14V0.500" fill="#f1f1f1" stroke="#b4b4b4"/><path d="M7 0C15 3 17 16.5 27 16.5H95Q98 16.5 98 14V0" fill="#fafafa" stroke="#a8a8a8"/></svg>
<svg class="abs" style="left:27px;top:363px" width="16" height="14" viewBox="0 0 16 14"><path d="M1.500 3.500Q1.500 1.500 3.500 1.500H6L7.500 3H13Q14.500 3 14.500 5V11Q14.500 12.500 13 12.500H3Q1.500 12.500 1.500 11Z" fill="#e6c45c" stroke="#b08a20"/><path d="M3 5.500H13.500V11.500H3Z" fill="#f7e39a"/><circle cx="8" cy="8" r="2.500" fill="#fbf3c8"/></svg>
<svg class="abs" style="left:105px;top:364px" width="17" height="13" viewBox="0 0 17 13"><rect x="1" y="1" width="3" height="3" fill="#d03030"/><rect x="1" y="5" width="3" height="3" fill="#30a040"/><rect x="1" y="9" width="3" height="3" fill="#3060c0"/><path d="M6 2.500H15M6 6.500H15M6 10.500H15" stroke="#444" stroke-width="1.500" stroke-dasharray="2 0.500"/></svg>
<span class="t" style="left:47px;top:365px;">Navigator</span>
<span class="t" style="left:125px;top:365px;">Legend</span>
<div class="abs" style="left:0;top:383px;width:245px;height:22px;background:linear-gradient(#fdfdfd,#eeeeee)"></div>
<span class="t" style="left:6px;top:388px;">Properties</span>
<svg class="abs" style="left:182px;top:387px" width="52" height="14" viewBox="0 0 52 14"><g fill="none" stroke="#2a2a2a" stroke-width="1"><path d="M4.500 4.500V2.500H11.500V8.500H9.500"/><rect x="2.500" y="5.500" width="6" height="5"/><path d="M23.500 2.500H28.500M24.500 2.500V7.500H27.500V2.500M23 7.500H29M26 7.500V11"/><path d="M40.500 3.500L47 10M47 3.500L40.500 10" stroke="#444" stroke-width="0.900"/></g></svg>
<div class="abs" style="left:2px;top:405px;width:241px;height:90px;background:#f0f0f0;border:1px solid #a9a9a9"></div>
<div class="abs" style="left:2px;top:498px;width:241px;height:30px;background:#fdfdfd;border:1px solid #a9a9a9"></div>
<span class="t" style="left:3px;top:500px;font-weight:bold;color:#111">(Name)</span>
<span class="t" style="left:3px;top:513px;">(Description)</span>
<svg class="abs" style="left:0;top:528px" width="245" height="19" viewBox="0 0 245 19"><path d="M99 0.500V13Q99 16.5 104 16.5H195Q198 16.5 198 14V0.500" fill="#f1f1f1" stroke="#b4b4b4"/><path d="M7 0C15 3 17 16.5 27 16.5H95Q98 16.5 98 14V0" fill="#fafafa" stroke="#a8a8a8"/></svg>
<svg class="abs" style="left:29px;top:531px" width="13" height="13" viewBox="0 0 13 13"><defs><radialGradient id="ig" cx="0.4" cy="0.3" r="0.8"><stop offset="0" stop-color="#6aa0f0"/><stop offset="1" stop-color="#1040b0"/></radialGradient></defs><circle cx="6.500" cy="6.500" r="6" fill="url(#ig)"/><path d="M6.500 5.500V10M6.500 3V4.300" stroke="#fff" stroke-width="1.600"/></svg>
<svg class="abs" style="left:105px;top:530px" width="16" height="15" viewBox="0 0 16 15"><path d="M2 13L11 4" stroke="#222" stroke-width="2"/><path d="M14 13L5 4" stroke="#222" stroke-width="2"/><path d="M8 2L12 1L15 4L13 5L10.500 3.500Z" fill="#c8c020" stroke="#555" stroke-width="0.600"/><path d="M2 3L4.500 1.500L6.500 4L4 6Z" fill="#333"/></svg>
<span class="t" style="left:45px;top:531px;">Properties</span>
<span class="t" style="left:124px;top:531px;">Tool properties</span>
<div class="abs" style="left:0;top:550px;width:245px;height:24px;background:linear-gradient(#fdfdfd,#eeeeee)"></div>
<span class="t" style="left:6px;top:557px;">Layers</span>
<div class="abs btn" style="left:155px;top:553px;width:26px;height:18px"></div><span class="t" style="left:158px;top:557px;">New</span>
<svg class="abs" style="left:182px;top:556px" width="52" height="14" viewBox="0 0 52 14"><g fill="none" stroke="#2a2a2a" stroke-width="1"><path d="M4.500 4.500V2.500H11.500V8.500H9.500"/><rect x="2.500" y="5.500" width="6" height="5"/><path d="M23.500 2.500H28.500M24.500 2.500V7.500H27.500V2.500M23 7.500H29M26 7.500V11"/><path d="M40.500 3.500L47 10M47 3.500L40.500 10" stroke="#444" stroke-width="0.900"/></g></svg>
<div class="abs" style="left:1px;top:575px;width:242px;height:78px;background:#fefefe;border:1px solid #a0a0a0"></div>
<svg class="abs" style="left:20px;top:581px" width="14" height="10" viewBox="0 0 14 10"><path d="M0.700 5Q7 -2.500 13.300 5Q7 11.500 0.700 5Z" fill="#fff" stroke="#1d6b2a" stroke-width="1.100"/><circle cx="7" cy="5" r="3.300" fill="#3fae4c"/><circle cx="7" cy="5" r="1.500" fill="#0c2a10"/></svg>
<svg class="abs" style="left:37px;top:578px" width="15" height="14" viewBox="0 0 15 14"><path d="M2 7V4Q2 1.500 4.500 1.500Q7 1.500 7 4V5" fill="none" stroke="#8a8a8a" stroke-width="1.600"/><rect x="3.500" y="5.500" width="10" height="7.500" fill="#d9a53c" stroke="#6a5520"/><path d="M4 9H13" stroke="#6a5520"/><rect x="5" y="7" width="2.500" height="4" fill="#5a4510"/></svg>
<span class="t" style="left:63px;top:580px;">main graphics layer</span>
<svg class="abs" style="left:20px;top:602px" width="14" height="10" viewBox="0 0 14 10"><path d="M0.700 5Q7 -2.500 13.300 5Q7 11.500 0.700 5Z" fill="#fff" stroke="#d8d8d8" stroke-width="1.100"/><circle cx="7" cy="5" r="3.300" fill="#e9e9e9"/><circle cx="7" cy="5" r="1.500" fill="#dcdcdc"/></svg>
<svg class="abs" style="left:37px;top:599px" width="15" height="14" viewBox="0 0 15 14"><path d="M2 7V4Q2 1.500 4.500 1.500Q7 1.500 7 4V5" fill="none" stroke="#8a8a8a" stroke-width="1.600"/><rect x="3.500" y="5.500" width="10" height="7.500" fill="#d9a53c" stroke="#6a5520"/><path d="M4 9H13" stroke="#6a5520"/><rect x="5" y="7" width="2.500" height="4" fill="#5a4510"/></svg>
<span class="t" style="left:63px;top:601px;">slice700.str</span>
<svg class="abs" style="left:20px;top:623px" width="14" height="10" viewBox="0 0 14 10"><path d="M0.700 5Q7 -2.500 13.300 5Q7 11.500 0.700 5Z" fill="#fff" stroke="#1d6b2a" stroke-width="1.100"/><circle cx="7" cy="5" r="3.300" fill="#3fae4c"/><circle cx="7" cy="5" r="1.500" fill="#0c2a10"/></svg>
<svg class="abs" style="left:37px;top:620px" width="15" height="14" viewBox="0 0 15 14"><path d="M2 7V4Q2 1.500 4.500 1.500Q7 1.500 7 4V5" fill="none" stroke="#8a8a8a" stroke-width="1.600"/><rect x="3.500" y="5.500" width="10" height="7.500" fill="#d9a53c" stroke="#6a5520"/><path d="M4 9H13" stroke="#6a5520"/><rect x="5" y="7" width="2.500" height="4" fill="#5a4510"/></svg>
<svg class="abs" style="left:5px;top:622px" width="12" height="11" viewBox="0 0 12 11"><path d="M1.500 6L4.500 9.500L10.500 1" fill="none" stroke="#111" stroke-width="1.700"/></svg>
<span class="t" style="left:56px;top:622px;color:#e0202c;font-weight:bold;font-style:italic;font-size:11px">* pit</span>
<div id="viewport" class="abs"></div>
<svg class="abs" style="left:250px;top:71px;filter:blur(0.400px)" width="1030" height="455" viewBox="250 71 1030 455"><defs>
<linearGradient id="brd" gradientUnits="userSpaceOnUse" x1="600" y1="210" x2="560" y2="300">
<stop offset="0" stop-color="#f1b366"/><stop offset="0.120" stop-color="#f5bb72"/><stop offset="0.250" stop-color="#f0b266"/><stop offset="0.400" stop-color="#f6bd76"/><stop offset="0.520" stop-color="#f1b569"/><stop offset="0.650" stop-color="#f6be78"/><stop offset="0.800" stop-color="#f2b66a"/><stop offset="1" stop-color="#f4b96e"/></linearGradient>
<linearGradient id="brd2" gradientUnits="userSpaceOnUse" x1="840" y1="325" x2="800" y2="372">
<stop offset="0" stop-color="#f0b062"/><stop offset="0.300" stop-color="#f6be76"/><stop offset="0.600" stop-color="#efb064"/><stop offset="1" stop-color="#f5bc72"/></linearGradient>
<clipPath id="pitL"><path d="M456.500 228L466.500 221.500L521.500 197.500L539.500 193.500L555 195L571 205L577.500 210.500L579 219.500L561 233L533 246L505 252.500L481 252.500L462.500 247.500L457 240Z"/></clipPath>
<clipPath id="pitLi"><path d="M482 242L541 213.800L552 215.900L561.300 222.200L560.600 228L533 241L500 249.500L486 248.500Z"/></clipPath>
<clipPath id="pitR"><path d="M783 349L787.500 342.800L796.700 339L801.300 330.600L810.500 325.200L825.700 323L839.500 326L851.700 332.900L861 342.800L865.500 353.500L876.200 355.800L890 358.900L900.700 364.200L906 371.900L903.700 378L894.600 385.600L882.300 388.700L859.400 386.400L845.600 382.600L830.300 375L813.500 364.200L802.800 360.400L790.600 356.600Z"/></clipPath>
<clipPath id="pitRi"><path d="M813.500 350.500L816.600 345L824.200 342L833.400 343.600L842.600 349L848.700 358L850.200 364.200L857.900 367.300L870 368.800L882.300 369.600L890 372.600L891.500 375.700L885.400 379.500L873 381L857.900 379.500L845.600 375L831.900 368.800L821.200 362.700L813.500 358L812 353.500Z"/></clipPath>
</defs><path d="M429.400 228.300L434.400 223.900L453.300 216.700L473.300 208.900L497.800 200L518.500 193.500L539.500 189L561 190.500L577.500 198L589 205L685 250.500L768 290L820 315L836.500 323L867 344L897.600 361L906.800 372L903.700 379.500L891.500 388.700L876 396.300L867 397L851.700 391.700L836.500 382.600L818 375L790.600 368.800L784.500 362.700L760 353.800L716 338.500L643 313.500L560 286L520 272.800L497.800 265.600L482.200 260.600L464.400 255.600L447.800 247.800L437.800 242.200L431 233.300Z" fill="url(#brd)"/><g opacity="0.180"><path d="M520 215L850 350L846 356L505 222Z" fill="#f9c47e"/><path d="M470 240L800 360L796 364L462 246Z" fill="#e9a656"/><path d="M560 200L870 346L868 350L552 204Z" fill="#e8a554"/><path d="M500 232L820 358L816 362L494 237Z" fill="#fac682"/></g><path d="M456.600 227.800L466.400 221.500L521.300 197.600L539.600 193.400L555 194.800L577.500 210.200L578.900 219.400L576.100 220.800L560.600 231.300L541 238.400L518.500 244.700L493.100 249.200L483.300 248.600L476.300 245.800L462.200 240.500L457.300 233.400Z" fill="#f1b364"/><path d="M456.600 227.800L466.400 221.500L521.300 197.600L524.100 210.200L470 235.500L462.200 240.500L457.300 233.400Z" fill="#d98a20"/><path d="M466.400 221.500L521.300 197.600L524.100 210.200L470 235.500Z" fill="#dc8e22"/><path d="M521.300 197.600L539.600 193.400L555 194.800L555 206.700L540 207L524.100 210.200Z" fill="#e89e30"/><path d="M555 194.800L566 202.500L566 213.500L555 206.700Z" fill="#b87414"/><path d="M566 202.500L572 206.500L572 218L566 213.500Z" fill="#a0640e"/><path d="M572 206.500L577.500 210.200L578.900 219.400L576.100 221.500L572 218Z" fill="#8a560c"/><path d="M462.200 240.500L470 235.500L524.100 210.200L540 207L555 206.700L566 213.500L576.100 221.500" fill="none" stroke="#f3cf30" stroke-width="1.100"/><path d="M479 243L541 213.300L552.200 215.400L561.800 222L561 228.500L541 235.600L518.500 241.900L498.800 245.800L487.500 246.300Z" fill="#f7c074"/><path d="M479 243L541 213.300L542 218.800L482 247Z" fill="#c88a20"/><path d="M510 228L541 213.300L542 218.800L512 232.500Z" fill="#b07820"/><path d="M541 213.300L552.200 215.400L551 221L542 218.800Z" fill="#8a5828"/><path d="M552.200 215.400L561.800 222L561 228.500L559.500 230L558.500 226L551 221Z" fill="#6e4226"/><path d="M479 243L541 213.300L552.200 215.400L561.800 222L561.400 226" fill="none" stroke="#f2cc2c" stroke-width="1"/><path d="M541 238.400L518.500 244.700L493.100 249.200L483.300 248.600L476.300 245.800L462.200 240.500" fill="none" stroke="#f4d030" stroke-width="1.500"/><path d="M576.100 220.800L560.600 231.300L541 238.400" fill="none" stroke="#f4d030" stroke-width="1" opacity="0.450"/><path d="M456.600 227.800L466.400 221.500L521.300 197.600L539.600 193.400L555 194.800L577.500 210.200L578.900 219.400" fill="none" stroke="#4a2898" stroke-width="1.200"/><path d="M577.500 223.600L560.600 233.800L532.500 246L504.400 252.400L480.500 252.400L462.200 247.500L443.900 239L438.300 229.200L452 232" fill="none" stroke="#5a2a90" stroke-width="1.100" stroke-dasharray="4 2.500"/><path d="M457 222.500L468 216L519 194.500M579 201L588.800 212.300L587.400 225L560.600 239L532.500 250.300L507 256.600L483 257.400L462 254.500" fill="none" stroke="#48a8a0" stroke-width="0.900" stroke-dasharray="7 2"/><path d="M429.400 228.300L434.400 223.900L453.300 216.700L473.300 208.900L497.800 200L518.500 193.500L539.500 189L561 190.500" fill="none" stroke="#a8c8a0" stroke-width="0.700" opacity="0.700"/><g stroke="#7878d8" stroke-width="0.800" opacity="0.850" fill="none"><path d="M462 256L459 260M466 257L463 262M470 258.500L467 263M474 259.500L471 264M478 260.500L475 265.500M482 262L480 266M487 263.500L485 267M474 241L478 246L481 243M486 236L489 240M492 233L494 237"/></g><clipPath id="pitR2"><path d="M782.500 348.800L786.300 341.900L795 338.800L799.400 331.300L808.800 325.600L825 322.500L837.500 324.400L850 331.300L858.800 340L863.800 351.300L873.800 354.400L887.500 356.900L898.800 361.900L905 368.800L906.300 375L900 381.300L887.500 385.600L875 387.500L860 386.900L845 382.500L830 373.800L812.500 364.400L790 356.300Z"/></clipPath><g clip-path="url(#pitR2)"><rect x="775" y="315" width="140" height="85" fill="#cf8a24"/><path d="M782.500 348.800L786.300 341.900L795 338.800L798.800 350L788.800 355.600Z" fill="#dc962e"/><path d="M795 338.800L799.400 331.300L801.900 341.900L798.800 350Z" fill="#b06c14"/><path d="M799.400 331.300L808.800 325.600L811.300 336.300L801.900 341.900Z" fill="#c8801e"/><path d="M808.800 325.600L825 322.500L825 333.800L811.300 336.300Z" fill="#e6a23a"/><path d="M825 322.500L837.500 324.400L837.500 336.300L825 333.800Z" fill="#dc962e"/><path d="M837.500 324.400L850 331.300L848.800 343.800L837.500 336.300Z" fill="#cc8622"/><path d="M850 331.300L858.800 340L856.300 352.500L848.800 343.800Z" fill="#b87216"/><path d="M858.800 340L863.800 351.300L862.500 361.300L856.300 352.500Z" fill="#a46410"/><path d="M863.800 351.300L873.800 354.400L872.500 363.800L862.500 361.300Z" fill="#d8922a"/><path d="M873.800 354.400L887.500 356.900L887.500 365.600L872.500 363.800Z" fill="#e29e34"/><path d="M887.500 356.900L898.800 361.900L898.800 370L887.500 365.600Z" fill="#cc8622"/><path d="M898.800 361.900L905 368.800L906.300 375L903.800 376L898.800 370Z" fill="#b87216"/><path d="M788.800 355.600L798.800 350L801.900 341.900L811.300 336.300L825 333.800L837.500 336.300L848.800 343.800L856.300 352.500L862.500 361.300L872.500 363.800L887.500 365.600L898.800 370L903.800 375L906.300 375L900 381.300L887.500 385.600L875 387.500L860 386.900L845 382.500L830 373.800L812.500 364.400L790 356.300Z" fill="#f3b96a"/><path d="M788.800 355.600L798.800 350L801.900 341.900L811.300 336.300L825 333.800L837.500 336.300L848.800 343.800L856.300 352.500L862.500 361.300L872.500 363.800L887.500 365.600L898.800 370L903.800 375" fill="none" stroke="#f2cf30" stroke-width="1.100"/></g><clipPath id="pitRi2"><path d="M803.500 358.500L806 356L813.800 350L816.300 345L823.800 341.300L831.300 341.900L841.300 347.500L847.500 356.300L850 362.500L860 365L875 366.300L887.500 370L891.900 374.400L887.500 378.800L877.500 380.600L862.500 380L850 376.300L838 371L826 366L814 361.500Z"/></clipPath><g clip-path="url(#pitRi2)"><rect x="800" y="338" width="96" height="46" fill="#bf7a1c"/><path d="M803.500 358.500L813.800 350L815 356L806 362Z" fill="#a86614"/><path d="M813.800 350L816.300 345L823.800 341.300L824.500 348.500L818 352L815 356Z" fill="#d48e28"/><path d="M823.800 341.300L831.300 341.900L841.300 347.500L840.500 355.500L832 349.500L824.500 348.500Z" fill="#e4a038"/><path d="M841.300 347.500L847.500 356.300L850 362.500L849.500 371L846 363L840.500 355.500Z" fill="#9a5c10"/><path d="M850 362.500L860 365L860 373.500L849.500 371Z" fill="#d8922a"/><path d="M860 365L875 366.300L875 375L860 373.500Z" fill="#c07a1c"/><path d="M875 366.300L887.500 370L891.900 374.400L889 378L875 375Z" fill="#b06c14"/><path d="M806 362L815 356L818 352L824.500 348.500L832 349.500L840.500 355.500L846 363L849.500 371L860 373.500L875 375L889 378L887.500 378.800L877.500 380.600L862.500 380L850 376.300L838 371L826 366L814 361.500Z" fill="#f5bd70"/><path d="M806 362L815 356L818 352L824.500 348.500L832 349.500L840.500 355.500L846 363L849.500 371L860 373.500L875 375L889 378" fill="none" stroke="#f2cf30" stroke-width="0.900"/></g><path d="M783 357L787.500 365L812 372L832 379.500L845 385L850 390L867.500 396.500L877.500 395L893 387.500L903.500 380L906.500 375.500L900 381.300L887.500 385.600L875 387.500L860 386.900L845 382.500L830 373.800L812.500 364.400L790 356.300L782.500 348.800Z" fill="#d9a230"/><path d="M850 390L867.500 396.500L866 388L846 383.500Z" fill="#d09828"/><path d="M866 388L877 388L877.500 395L867.500 396.500Z" fill="#f0c050"/><path d="M877 388L888 385.800L893 387.500L877.500 395Z" fill="#b88018"/><path d="M787.500 362.500L812 369.500L832 377L846 383.500L860 387.500L875 388.300L888 386.300L900 382L906.300 376" fill="none" stroke="#f0d428" stroke-width="1.100"/><path d="M782.500 348.800L786.300 341.900L795 338.800L799.400 331.300L808.800 325.600L825 322.500L837.500 324.400L850 331.300L858.800 340L863.800 351.300L873.800 354.400L887.500 356.900L898.800 361.900L905 368.800L906.300 375" fill="none" stroke="#4a2898" stroke-width="1.200"/><path d="M906.300 375L900 381.300L887.500 385.600L875 387.500L860 386.900L845 382.500" fill="none" stroke="#6a4a98" stroke-width="0.800"/><path d="M813.800 350L816.300 345L823.800 341.300L831.300 341.900L841.300 347.500L847.500 356.300L850 362.500L860 365L875 366.300L887.500 370L891.900 374.400" fill="none" stroke="#7a4888" stroke-width="0.700" opacity="0.800"/><path d="M784 351.500L790 356.300L812.500 364.400" fill="none" stroke="#2a1a70" stroke-width="0.900" stroke-dasharray="5 1.500"/><g stroke="#5858c8" stroke-width="1" fill="none"><path d="M804 370Q804.500 364.500 809 365Q813 366 812.500 371"/><path d="M819 366L823 372L826 368L830 375L833 370.500L831 376M842 367L846 373M851 374L855 378.500L858 376.500M846 355L856 360L860 356.500M814 353L817 349.500"/></g><path d="M813 361H835.600M824.400 350V372.500" stroke="#1c3c98" stroke-width="1.700"/><g stroke="#8080e0" stroke-width="0.900" opacity="0.900" fill="none"><path d="M845 390L843 394M849 392.500L847 397M853 394.500L851.500 399M857 396L856 400M868 402L874 397L880 402M884 392.500L888 397.500M888 390.500L892 395.500M891.500 388.500L895.500 393M880 395.500L884 400.500"/></g><path d="M847 494.500L855 502.500M855 494.500L847 502.500" stroke="#5a5290" stroke-width="1.200"/><path d="M284 492V477" stroke="#8078d8" stroke-width="1.600"/><path d="M281 479.500L284 471L287 479.500Z" fill="#a8a0f0"/><path d="M284 492L273 486" stroke="#189028" stroke-width="2"/><path d="M268 483L276.500 484L273.500 489.500Z" fill="#20a030"/><path d="M284 492L294 486.500" stroke="#a01818" stroke-width="2"/><path d="M299 483.500L291 484.500L294 489.500Z" fill="#b82020"/><text x="281" y="467" font-size="10" fill="#8888d8" font-family="Liberation Sans,sans-serif">Z</text><text x="259.500" y="486" font-size="10" fill="#30a838" font-weight="bold" font-family="Liberation Sans,sans-serif">Y</text><text x="304" y="486" font-size="10" fill="#b82838" font-family="Liberation Sans,sans-serif">X</text></svg>
<div id="output" class="abs"></div>
<div class="abs" style="left:247px;top:532px;width:1010px;height:103px;overflow:hidden">
<span class="t" style="left:1px;top:-4px">60 percent complete</span>
<span class="t" style="left:1px;top:9px">80 percent complete</span>
<span class="t" style="left:1px;top:22px">100 percent complete</span>
<span class="t" style="left:1px;top:35px">Testing segments of each string against each other</span>
<span class="t" style="left:1px;top:48px">Testing each segment for internal cross-overs</span>
<span class="t" style="left:1px;top:61px">Cross-over test completed</span>
<span class="t" style="left:1px;top:74px">No breakline intersections found. DTM formation will proceed.</span>
<span class="t" style="left:1px;top:87px">Triangles formed = 708</span>
</div>
<div class="abs" style="left:1264px;top:534px;width:16px;height:100px;background:#fafafa"></div>
<div class="abs" style="left:1268px;top:540px;border:3.500px solid transparent;border-bottom:4px solid #333;border-top:0"></div>
<div class="abs" style="left:1268px;top:624px;border:3.500px solid transparent;border-top:4px solid #333;border-bottom:0"></div>
<div class="abs" style="left:1265px;top:611px;width:12px;height:6px;border:1px solid #8a8a8a;border-radius:1px;background:#f0f0f0"></div>
<div id="cmd" class="abs"></div>
<span class="t" style="left:248px;top:638px;">GRAPHICS CREATE DTM (GCD)</span>
<div id="status" class="abs"></div>
<span class="t" style="left:5px;top:663px;color:#2a8a2a">Y</span>
<span class="t" style="left:18px;top:663px;">1312.849</span>
<div class="abs" style="left:107px;top:659px;width:1px;height:20px;background:#a8a8a8"></div>
<span class="t" style="left:112px;top:663px;color:#d02828">X</span>
<span class="t" style="left:124px;top:663px;">-174.012</span>
<div class="abs" style="left:214px;top:659px;width:1px;height:20px;background:#a8a8a8"></div>
<span class="t" style="left:219px;top:663px;color:#2828c0">Z</span>
<span class="t" style="left:231px;top:663px;">702.334</span>
<div class="abs" style="left:321px;top:660px;width:35px;height:19px;border:1px solid #fbfbfb;border-right-color:#8e8e8e;border-bottom-color:#8e8e8e;background:#f3f3f3"></div>
<div class="abs" style="left:356px;top:660px;width:64px;height:19px;border:1px solid #fbfbfb;border-right-color:#8e8e8e;border-bottom-color:#8e8e8e;background:#f3f3f3"></div>
<span class="t" style="left:323px;top:664px;">Str = 1</span>
<span class="t" style="left:358px;top:664px;">80.000 angle</span>
<svg class="abs" style="left:423px;top:662px" width="17" height="16" viewBox="0 0 17 16"><rect x="1.500" y="4.500" width="6" height="6" fill="#fff" stroke="#333"/><path d="M3 6.500H6M3 8.500H6" stroke="#333"/><rect x="9.500" y="1.500" width="6" height="6" fill="#5060d0" stroke="#222"/><rect x="9.500" y="8.500" width="6" height="6.500" fill="#fff" stroke="#222"/><path d="M11 11H14M11 13H14" stroke="#222"/><path d="M7.500 7.500H9.500" stroke="#222"/></svg>
<span class="t" style="left:441px;top:665px;">rio</span>
<div class="abs" style="left:461px;top:669px;border:3px solid transparent;border-top:3.500px solid #111;border-bottom:0"></div>
<svg class="abs" style="left:473px;top:662px" width="16" height="16" viewBox="0 0 16 16"><path d="M8 1L15 4.500V11.500L8 15L1 11.500V4.500Z" fill="#6a28d8" stroke="#3a0a90"/><path d="M8 1L15 4.500L8 8L1 4.500Z" fill="#9a5af0"/><path d="M8 8V15" stroke="#3a0a90"/><path d="M1 8L8 11.500L15 8M4.500 2.800V13.200M11.500 2.800V13.200" stroke="#3a0a90" stroke-width="0.600" fill="none"/></svg>
<span class="t" style="left:491px;top:665px;">rio</span>
<div class="abs" style="left:511px;top:669px;border:3px solid transparent;border-top:3.500px solid #111;border-bottom:0"></div>
<div id="taskbar" class="abs"></div>
<svg class="abs" style="left:0;top:682px" width="1280" height="38" viewBox="0 682 1280 38"><defs>
<linearGradient id="tbg" x1="0" y1="0" x2="0" y2="1"><stop offset="0" stop-color="#787c80"/><stop offset="0.060" stop-color="#5e6266"/><stop offset="0.085" stop-color="#1a1d22"/><stop offset="0.130" stop-color="#0e1116"/><stop offset="1" stop-color="#090b0e"/></linearGradient>
<linearGradient id="actb" x1="0" y1="0" x2="1" y2="1"><stop offset="0" stop-color="#b4b4b4"/><stop offset="0.5" stop-color="#8e8e8e"/><stop offset="1" stop-color="#6c6c6c"/></linearGradient>
<linearGradient id="actb2" x1="0" y1="0" x2="0" y2="1"><stop offset="0" stop-color="#4a4c50"/><stop offset="1" stop-color="#15171a"/></linearGradient>
<radialGradient id="orbS" cx="0.5" cy="0.950" r="0.950"><stop offset="0" stop-color="#50e0ff"/><stop offset="0.350" stop-color="#2090d8"/><stop offset="0.650" stop-color="#1c5ea8"/><stop offset="1" stop-color="#5a90c0"/></radialGradient>
<radialGradient id="gb" cx="0.4" cy="0.35" r="0.75"><stop offset="0" stop-color="#c0e4ff"/><stop offset="0.350" stop-color="#3a8ae0"/><stop offset="1" stop-color="#0c3a88"/></radialGradient>
<radialGradient id="gr" cx="0.4" cy="0.3" r="0.75"><stop offset="0" stop-color="#ffd890"/><stop offset="0.350" stop-color="#f06020"/><stop offset="1" stop-color="#a81818"/></radialGradient>
<linearGradient id="redt" x1="0" y1="0" x2="0.300" y2="1"><stop offset="0" stop-color="#f86a44"/><stop offset="0.600" stop-color="#ee5038"/><stop offset="1" stop-color="#c43424"/></linearGradient>
<linearGradient id="nps" x1="0" y1="0" x2="0" y2="1"><stop offset="0" stop-color="#4858d8"/><stop offset="0.550" stop-color="#3080e0"/><stop offset="1" stop-color="#30b8f0"/></linearGradient>
<linearGradient id="fol" x1="0" y1="0" x2="0" y2="1"><stop offset="0" stop-color="#fbeaa0"/><stop offset="1" stop-color="#e8c860"/></linearGradient>
<linearGradient id="vlc" x1="0" y1="0" x2="1" y2="0"><stop offset="0" stop-color="#f8a020"/><stop offset="0.5" stop-color="#ff8800"/><stop offset="1" stop-color="#e06800"/></linearGradient>
<linearGradient id="pdf" x1="0" y1="0" x2="0" y2="1"><stop offset="0" stop-color="#e81818"/><stop offset="0.5" stop-color="#c80808"/><stop offset="1" stop-color="#780404"/></linearGradient>
</defs><rect x="0" y="682" width="1280" height="38" fill="url(#tbg)"/><circle cx="25" cy="702" r="17.800" fill="#1a2838" stroke="#4a6888" stroke-width="1"/><circle cx="25" cy="702" r="16.500" fill="url(#orbS)"/><path d="M8.700 702Q16 697 25 701.500Q34 706 41.300 702A16.300 16.300 0 0 0 8.700 702Z" fill="#a4cce8" opacity="0.800"/><path d="M17.500 692.500Q21.500 690.500 26 692.500L24.500 700Q21 698.500 16 700.500Z" fill="#f06428"/><path d="M27.500 693.500Q31.500 696 36 693.500L34.500 701.500Q30.500 703.500 26 701.500Z" fill="#8cc63c"/><path d="M15.500 702Q19.500 700.500 24 702.500L22.500 710Q19 708.500 14 710Z" fill="#3aa0e8"/><path d="M25.500 703.500Q29.500 705.500 34 703.500L32.500 711Q28.500 713 24 711Z" fill="#f8c62c"/><rect x="56.500" y="683.500" width="54" height="35" rx="2.500" fill="url(#actb)" stroke="#d8d8d8"/><path d="M66 716Q75 704 90 712L92 717Z" fill="#a8a8a8" opacity="0.700"/><circle cx="83.500" cy="700" r="10.500" fill="url(#gb)"/><path d="M68 687Q74 690 79 697Q84 704 92 707Q86 701 82 696Q76 689 68 687Z" fill="#40d0c0"/><path d="M89 709Q91 713 92 717L90 714Z" fill="#40d0c0" stroke="#40d0c0"/><path d="M130 716Q136 709 148 712L151 716.500Z" fill="#888" opacity="0.800"/><circle cx="142" cy="700" r="10.500" fill="url(#gr)"/><path d="M126 687.500Q132 690 137 697Q142 704 150 707Q144 701 140 696Q134 689 126 687.500ZM127 692Q132 695 135 701L131 697Z" fill="#40c8b8"/><path d="M147 708Q150 713 151 717L148 713Z" fill="#40c8b8" stroke="#40c8b8"/><path d="M185.500 691.200L207.500 686.600L214.500 705.300L190.200 716.100Z" fill="url(#redt)"/><path d="M185.500 691.200L190.200 716.100L191.500 715.500L187 692Z" fill="#f8a090" opacity="0.700"/><path d="M197.500 689L201 701M189 704L212 697.500M201 701L204.500 710M194 703L196.500 713M203 688L206 696L210 695" stroke="#b82c1c" stroke-width="0.900" fill="none"/><path d="M244 691.200L265.600 686.600L272.600 705.300L248.700 716.100Z" fill="url(#redt)"/><path d="M244 691.200L248.700 716.100L250 715.500L245.500 692Z" fill="#f8a090" opacity="0.700"/><path d="M247 703L270 696.500M252 690L262 699.500M256 689L266 693M248.500 707L268 700" stroke="#b82c1c" stroke-width="0.900" fill="none"/><rect x="314.500" y="686.500" width="8" height="8" fill="#1010e0" stroke="#e0e0f0"/><rect x="323.500" y="686.500" width="8" height="8" fill="#1010e0" stroke="#e0e0f0"/><rect x="305.500" y="695.500" width="8" height="8" fill="#1010e0" stroke="#e0e0f0"/><rect x="314.500" y="695.500" width="8" height="8" fill="#1010e0" stroke="#e0e0f0"/><rect x="323.500" y="695.500" width="8" height="8" fill="#1010e0" stroke="#e0e0f0"/><rect x="305.500" y="704.500" width="8" height="8" fill="#1010e0" stroke="#e0e0f0"/><rect x="314.500" y="704.500" width="8" height="8" fill="#1010e0" stroke="#e0e0f0"/><path d="M365 687V716" stroke="#5a8898" stroke-width="1.100"/><path d="M373 686V710" stroke="#88b8c4" stroke-width="1.300"/><path d="M362 707H378" stroke="#78a8b0" stroke-width="1.200"/><path d="M364 697H384" stroke="#9cc8d0" stroke-width="1.300"/><circle cx="432" cy="701" r="13" fill="#e04030"/><path d="M432 701L420.700 694.500A13 13 0 0 0 438.500 712.300Z" fill="#38a848"/><path d="M432 701L438.500 712.300A13 13 0 0 0 444.500 697.500L432 697Z" fill="#f8d020"/><circle cx="432" cy="701" r="6" fill="#f4f4f4"/><circle cx="432" cy="701" r="4.800" fill="#4a8ae0"/><path d="M476 691Q476 688.500 478.500 688.500H485L487 691H502Q504 691 504 693V712H476Z" fill="url(#fol)" stroke="#c8a848"/><rect x="482" y="689" width="6" height="4" fill="#e04830"/><rect x="490" y="690" width="6" height="4" fill="#48a848"/><path d="M478 698H502V713H478Z" fill="#fbf0b8" stroke="#d8b858"/><path d="M480 706Q490 702 500 706V714H480Z" fill="#78b8e0"/><rect x="484" y="709" width="12" height="5" fill="#c8e0f0"/><path d="M537.500 696.500Q537.500 694.500 539.500 694.500H543L545 691.500H552L554 694.500H559Q561 694.500 561 696.500V709Q561 711 559 711H539.500Q537.500 711 537.500 709Z" fill="none" stroke="#c86820" stroke-width="1.600"/><circle cx="548.500" cy="702.500" r="4.500" fill="none" stroke="#c86820" stroke-width="1.600"/><circle cx="557" cy="698" r="1" fill="#c86820"/><rect x="593" y="688" width="27" height="27" rx="1.500" fill="url(#nps)"/><text x="606.500" y="706" font-size="11" font-weight="bold" fill="#fff" text-anchor="middle" font-family="Liberation Sans,sans-serif">NPS</text><ellipse cx="662" cy="697" rx="9.500" ry="8" fill="#f4f0f0" stroke="#d04040" stroke-width="1.500"/><ellipse cx="660" cy="705" rx="8" ry="4" fill="#a8a0a0" opacity="0.700"/><path d="M658 691L668 708M668 691L661 704" stroke="#888" stroke-width="1.600"/><ellipse cx="667" cy="711.500" rx="2.300" ry="3.300" fill="none" stroke="#3898c8" stroke-width="1.500" transform="rotate(-25 667 711.500)"/><ellipse cx="674" cy="707" rx="2.300" ry="3.300" fill="none" stroke="#3898c8" stroke-width="1.500" transform="rotate(-60 674 707)"/><path d="M731 686L732 706L712 706Q722 699 731 686Z" fill="#f8a828"/><path d="M732 690L736 706H732Z" fill="#e8e030"/><path d="M712 707H733L729 713H717Z" fill="#3860d0"/><path d="M712 700Q716 693 722 694L716 706H712Z" fill="#40a840"/><ellipse cx="723" cy="709" rx="13" ry="4.500" fill="none" stroke="#d8d020" stroke-width="1.600"/><path d="M722 714H737V717H724Z" fill="#a0a0a0"/><path d="M780 687L786 708H774Z" fill="url(#vlc)"/><path d="M778.300 693H781.700L783 697.500H777Z" fill="#f4f4f4"/><path d="M776 701.500H784L785.200 705.500H774.800Z" fill="#f4f4f4"/><path d="M771 708H789L792 715H768Z" fill="#f08808"/><path d="M826 696L846 689L852 706L832 714Z" fill="#58a8e0" stroke="#b8d0e8" stroke-width="1.500"/><circle cx="839" cy="701.500" r="6" fill="none" stroke="#184878" stroke-width="1.500"/><path d="M833 700L845 703M839 702V707.500" stroke="#184878" stroke-width="1.400"/><rect x="870.500" y="683.500" width="55" height="35" rx="2.500" fill="url(#actb2)" stroke="#8a8c90"/><rect x="884" y="686" width="28" height="29" fill="url(#pdf)"/><path d="M888 710Q896 703 898 692Q898.500 689 897 689Q895.500 689.500 896.500 693Q899 702 908 706Q910 706.500 909 705Q905 703.500 898 704.500Q892 706 888 710Z" fill="none" stroke="#fff" stroke-width="1.300"/><path d="M1083 703.500L1087 699.500L1091 703.500Z" fill="#f0f0f0"/><rect x="1104" y="695" width="7" height="11" rx="1" fill="none" stroke="#e8e8e8" stroke-width="1.300"/><rect x="1106" y="693.500" width="3" height="1.500" fill="#e8e8e8"/><path d="M1109 698H1114V702Q1114 704 1111.500 704V708" stroke="#f0f0f0" stroke-width="1.500" fill="#d8d8d8"/><path d="M1110 695.500V698M1113 695.500V698" stroke="#f0f0f0"/><path d="M1127 698.500H1130L1134 694.500V708L1130 704H1127Z" fill="#f0f0f0"/><path d="M1136.500 698Q1138.500 701 1136.500 704.500M1139 696Q1142 701 1139 706.500" stroke="#d8d8d8" stroke-width="1.100" fill="none"/><circle cx="1161.500" cy="702" r="3.300" fill="#f8b020"/><path d="M1161.500 696V708M1156 702H1167M1157.500 698L1165.500 706M1165.500 698L1157.500 706" stroke="#f0a018" stroke-width="1.200"/><path d="M1150 704H1156" stroke="#a8a8a8" stroke-width="1.200" stroke-dasharray="1.500 1"/><path d="M1173.500 693V709" stroke="#f0f0f0" stroke-width="1.500"/><path d="M1174.500 694Q1178 692.500 1180 694.500Q1182 696 1185 694.500V702Q1182 703.500 1180 702Q1178 700.500 1174.500 702Z" fill="#f0f0f0"/><circle cx="1183.500" cy="705" r="4" fill="#d82828"/><path d="M1181.500 703L1185.500 707M1185.500 703L1181.500 707" stroke="#fff" stroke-width="1.300"/><rect x="1270.500" y="683" width="10" height="38" fill="#1a1d22" stroke="#3c4046"/></svg>
<span class="t" style="left:1200px;top:687px;width:60px;text-align:center;color:#fff;font-size:11px;font-family:'Liberation Sans',sans-serif">23:23</span>
<span class="t" style="left:1196px;top:704px;width:68px;text-align:center;color:#fff;font-size:11px;font-family:'Liberation Sans',sans-serif">09-03-2013</span>
</div>
</body>
</html>
